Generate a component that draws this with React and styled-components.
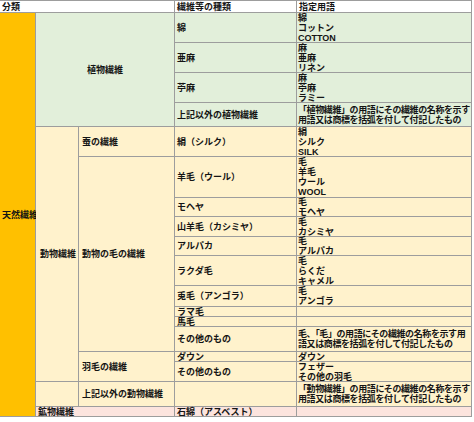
import React from 'react';
import styled, { createGlobalStyle } from 'styled-components';

const GlobalStyle = createGlobalStyle`
  body {
    margin: 0;
    background: #fff;
    font-family: "Liberation Sans", "Noto Sans CJK JP", sans-serif;
  }
`;

const colors = {
  white: '#ffffff',
  orange: '#ffc000',
  green: '#e2efda',
  cream: '#fff2cc',
  pink: '#fce4de',
  line: '#9d9d9d',
};

// row heights measured from the sheet (header first)
const rowHeights = [12, 30, 30, 30, 24, 30, 41, 19, 20, 19, 30, 21, 10, 10, 25, 10, 20, 25, 10];

const Sheet = styled.div`
  display: grid;
  grid-template-columns: 36px 43px 96px 122px 175px;
  grid-template-rows: ${rowHeights.map(h => `${h}px`).join(' ')};
  width: 472px;
  border-top: 1px solid ${colors.line};
  color: #141414;
  font-size: 9px;
  line-height: 10px;
  font-weight: 700;
`;

const Cell = styled.div`
  grid-column: ${props => props.$col};
  grid-row: ${props => props.$row};
  background: ${props => props.$bg || colors.white};
  border-right: 1px solid ${colors.line};
  border-bottom: 1px solid ${colors.line};
  box-sizing: border-box;
  display: flex;
  flex-direction: column;
  justify-content: center;
  align-items: ${props => props.$center ? 'center' : 'flex-start'};
  padding: 0 ${props => props.$pad ?? 2}px;
  white-space: nowrap;
  min-width: 0;
  min-height: 0;
`;

// long notes run right to the sheet edge, so they get a touch tighter
const Line = styled.span`
  display: block;
  letter-spacing: ${props => props.$tight ? '-0.4px' : '0'};
`;

const plants = [
  ['綿', ['綿', 'コットン', 'COTTON']],
  ['亜麻', ['麻', '亜麻', 'リネン']],
  ['苧麻', ['麻', '苧麻', 'ラミー']],
  ['上記以外の植物繊維', ['「植物繊維」の用語にその繊維の名称を示す', '用語又は商標を括弧を付して付記したもの']],
];

const animals = [
  ['絹（シルク）', ['絹', 'シルク', 'SILK']],
  ['羊毛（ウール）', ['毛', '羊毛', 'ウール', 'WOOL']],
  ['モヘヤ', ['毛', 'モヘヤ']],
  ['山羊毛（カシミヤ）', ['毛', 'カシミヤ']],
  ['アルパカ', ['毛', 'アルパカ']],
  ['ラクダ毛', ['毛', 'らくだ', 'キャメル']],
  ['兎毛（アンゴラ）', ['毛', 'アンゴラ']],
  ['ラマ毛', []],
  ['馬毛', []],
  ['その他のもの', ['毛、「毛」の用語にその繊維の名称を示す用', '語又は商標を括弧を付して付記したもの']],
  ['ダウン', ['ダウン']],
  ['その他のもの', ['フェザー', 'その他の羽毛']],
  ['', ['「動物繊維」の用語にその繊維の名称を示す', '用語又は商標を括弧を付して付記したもの']],
];

function Terms({ lines }) {
  return lines.map((l, i) => <Line key={i} $tight={l.length > 12}>{l}</Line>);
}

export default function App() {
  return (
    <>
      <GlobalStyle />
      <Sheet>
        <Cell $col="1 / 4" $row="1">分類</Cell>
        <Cell $col="4" $row="1">繊維等の種類</Cell>
        <Cell $col="5" $row="1">指定用語</Cell>

        <Cell $col="1" $row="2 / 20" $bg={colors.orange}>天然繊維</Cell>

        <Cell $col="2 / 4" $row="2 / 6" $bg={colors.green} $center>植物繊維</Cell>
        {plants.map(([kind, terms], i) => (
          <React.Fragment key={kind}>
            <Cell $col="4" $row={`${i + 2}`} $bg={colors.green}>{kind}</Cell>
            <Cell $col="5" $row={`${i + 2}`} $bg={colors.green} $pad={1}><Terms lines={terms} /></Cell>
          </React.Fragment>
        ))}

        <Cell $col="2" $row="6 / 18" $bg={colors.cream} $pad={4}>動物繊維</Cell>
        <Cell $col="2" $row="18" $bg={colors.cream} />
        <Cell $col="3" $row="6" $bg={colors.cream} $pad={3}>蚕の繊維</Cell>
        <Cell $col="3" $row="7 / 16" $bg={colors.cream} $pad={3}>動物の毛の繊維</Cell>
        <Cell $col="3" $row="16 / 18" $bg={colors.cream} $pad={3}>羽毛の繊維</Cell>
        <Cell $col="3" $row="18" $bg={colors.cream} $pad={3}>上記以外の動物繊維</Cell>
        {animals.map(([kind, terms], i) => (
          <React.Fragment key={i}>
            <Cell $col="4" $row={`${i + 6}`} $bg={colors.cream}>{kind}</Cell>
            <Cell $col="5" $row={`${i + 6}`} $bg={colors.cream} $pad={1}><Terms lines={terms} /></Cell>
          </React.Fragment>
        ))}

        <Cell $col="2 / 4" $row="19" $bg={colors.pink}>鉱物繊維</Cell>
        <Cell $col="4" $row="19" $bg={colors.pink}>石綿（アスベスト）</Cell>
        <Cell $col="5" $row="19" $bg={colors.pink} />
      </Sheet>
    </>
  );
}
